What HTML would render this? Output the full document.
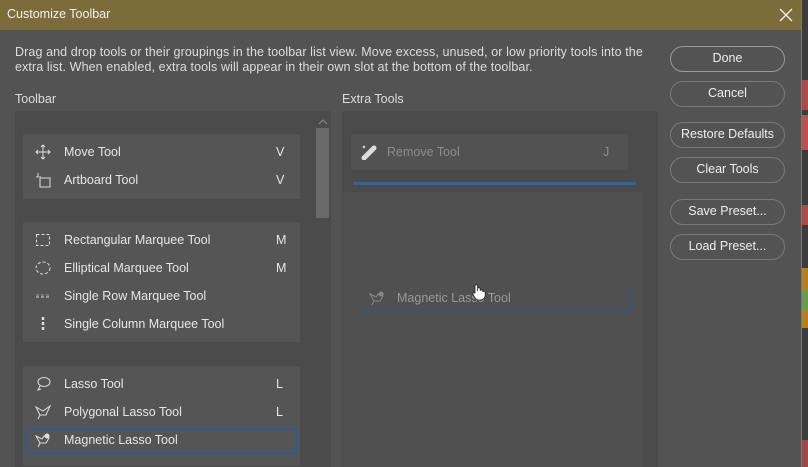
<!DOCTYPE html><html><head><style>
*{margin:0;padding:0;box-sizing:border-box}
body{width:808px;height:467px;overflow:hidden;background:#535353;font-family:"Liberation Sans",sans-serif;font-size:12.5px;color:#e6e6e6;position:relative}
.a{position:absolute}
.title{left:0;top:0;width:801px;height:30px;background:#7c6c3c;}
.btn{position:absolute;left:670px;width:115px;height:26px;border:1.5px solid #7a7a7a;border-radius:13px;text-align:center;line-height:23px;color:#eee;font-size:12.5px}
.grp{position:absolute;left:22px;width:279px;background:#555;border:1px solid #4a4a4a}
.row{position:absolute;left:41px;height:20px;line-height:20px;width:250px}
.row .t{position:absolute;left:23px}
.row .k{position:absolute;left:235px}
.row svg{position:absolute;left:-6px;top:2px}
</style></head><body>
<div class="a title"></div>
<div class="a" style="left:7px;top:7px;font-size:12.5px;color:#f2f2f2">Customize Toolbar</div>
<svg class="a" style="left:779px;top:8px" width="14" height="14"><path d="M1 1L13 13M13 1L1 13" stroke="#eee" stroke-width="1.4"/></svg>
<div class="a" style="left:801px;top:0;width:1px;height:467px;background:#8a7a4a"></div>
<div class="a" style="left:802px;top:0;width:6px;height:467px;background:#3c3c3c"></div>
<div class="a" style="left:802px;top:80px;width:6px;height:30px;background:#b04848"></div>
<div class="a" style="left:802px;top:115px;width:6px;height:35px;background:#c05050"></div>
<div class="a" style="left:802px;top:205px;width:6px;height:20px;background:#b04848"></div>
<div class="a" style="left:802px;top:268px;width:6px;height:60px;background:#b8801c"></div>
<div class="a" style="left:802px;top:290px;width:6px;height:20px;background:#6a9a50"></div>
<div class="a" style="left:802px;top:440px;width:6px;height:27px;background:#a04848"></div>
<div class="a" style="left:15px;top:45px;width:630px;line-height:15px;color:#ddd;letter-spacing:0.1px">Drag and drop tools or their groupings in the toolbar list view. Move excess, unused, or low priority tools into the extra list. When enabled, extra tools will appear in their own slot at the bottom of the toolbar.</div>
<div class="a" style="left:15px;top:92px;color:#ddd">Toolbar</div>
<div class="a" style="left:342px;top:92px;color:#ddd">Extra Tools</div>
<div class="a" style="left:15px;top:111px;width:316px;height:356px;background:#4b4b4b"></div>
<div class="a" style="left:316px;top:128px;width:13px;height:90px;background:#6a6a6a"></div>
<svg class="a" style="left:318px;top:118px" width="10" height="8"><path d="M1 6L5 2L9 6" stroke="#888" fill="none"/></svg>
<div class="grp" style="top:133px;height:67px"></div>
<div class="grp" style="top:221px;height:122px"></div>
<div class="grp" style="top:365px;height:102px"></div>
<div class="a" style="left:25px;top:428px;width:272px;height:26px;border:2px solid #2e5a8c"></div>
<div class="row" style="top:142px"><svg width="16" height="16"><path d="M8 1V15M1 8H15M6 3L8 1L10 3M6 13L8 15L10 13M3 6L1 8L3 10M13 6L15 8L13 10" stroke="#ddd" fill="none"/></svg><span class="t">Move Tool</span><span class="k">V</span></div>
<div class="row" style="top:170px"><svg width="16" height="16"><path d="M3 1V5H1M5 6H15V15H5V5M5 4V6" stroke="#ddd" fill="none"/></svg><span class="t">Artboard Tool</span><span class="k">V</span></div>
<div class="row" style="top:230px"><svg width="16" height="16"><rect x="1.5" y="2.5" width="13" height="11" stroke="#ddd" fill="none" stroke-dasharray="3 2"/></svg><span class="t">Rectangular Marquee Tool</span><span class="k">M</span></div>
<div class="row" style="top:258px"><svg width="16" height="16"><ellipse cx="8" cy="8" rx="7" ry="6" stroke="#ddd" fill="none" stroke-dasharray="3 2"/></svg><span class="t">Elliptical Marquee Tool</span><span class="k">M</span></div>
<div class="row" style="top:286px"><svg width="16" height="16"><path d="M1 9H15" stroke="#ddd" stroke-dasharray="3 2"/><path d="M1 7H15" stroke="#ddd" stroke-dasharray="3 2" opacity=".5"/></svg><span class="t">Single Row Marquee Tool</span></div>
<div class="row" style="top:314px"><svg width="16" height="16"><path d="M8 1V15" stroke="#ddd" stroke-width="2.5" stroke-dasharray="3 2"/></svg><span class="t">Single Column Marquee Tool</span></div>
<div class="row" style="top:374px"><svg width="16" height="16"><ellipse cx="9" cy="6" rx="6" ry="4.5" stroke="#ddd" fill="none"/><path d="M5 10L3 14L6 13" stroke="#ddd" fill="none"/></svg><span class="t">Lasso Tool</span><span class="k">L</span></div>
<div class="row" style="top:402px"><svg width="16" height="16"><path d="M1 3L8 7L15 2L11 11L5 11Z M5 11L3 15" stroke="#ddd" fill="none"/></svg><span class="t">Polygonal Lasso Tool</span><span class="k">L</span></div>
<div class="row" style="top:430px"><svg width="16" height="16"><path d="M1 4L7 7L9 4L14 6L11 11L5 11Z M5 11L3 15" stroke="#ddd" fill="none"/><circle cx="12" cy="4" r="2.5" fill="#ddd"/></svg><span class="t">Magnetic Lasso Tool</span></div>
<div class="a" style="left:342px;top:111px;width:316px;height:356px;background:#4b4b4b"></div>
<div class="a" style="left:343px;top:192px;width:300px;height:275px;background:#505050"></div>
<div class="a" style="left:350px;top:133px;width:279px;height:38px;background:#525252;border:1px solid #4a4a4a"></div>
<svg class="a" style="left:361px;top:144px" width="16" height="16"><path d="M3 14L13 4" stroke="#ddd" stroke-width="5" stroke-linecap="round"/><path d="M2 2L4 4M4 2L2 4" stroke="#ddd"/></svg>
<div class="a" style="left:387px;top:145px;color:#8c8c8c">Remove Tool</div>
<div class="a" style="left:603px;top:145px;color:#8c8c8c">J</div>
<div class="a" style="left:353px;top:182px;width:283px;height:3px;background:#3a628f;border-radius:1px"></div>
<div class="a" style="left:361px;top:285px;width:270px;height:26px;border:1px solid #3d5470"></div>
<svg class="a" style="left:369px;top:290px" width="16" height="16"><path d="M1 4L7 7L9 4L14 6L11 11L5 11Z M5 11L3 15" stroke="#888" fill="none"/><circle cx="12" cy="4" r="2.5" fill="#888"/></svg>
<div class="a" style="left:397px;top:291px;color:#999">Magnetic Lasso Tool</div>
<svg class="a" style="left:471px;top:283px" width="16" height="18"><path d="M4 9V3a1.3 1.3 0 0 1 2.6 0V8V6a1.3 1.3 0 0 1 2.6 0V8a1.3 1.3 0 0 1 2.6 0V9a1.3 1.3 0 0 1 2.4 0V13Q13 17 9 17H7Q4 16 2 11Q2 9 4 10Z" fill="#fff" stroke="#222" stroke-width=".8"/></svg>
<div class="btn" style="top:46px;border-color:#9a9a9a">Done</div>
<div class="btn" style="top:81px">Cancel</div>
<div class="btn" style="top:122px">Restore Defaults</div>
<div class="btn" style="top:157px">Clear Tools</div>
<div class="btn" style="top:199px">Save Preset...</div>
<div class="btn" style="top:234px">Load Preset...</div>
</body></html>
